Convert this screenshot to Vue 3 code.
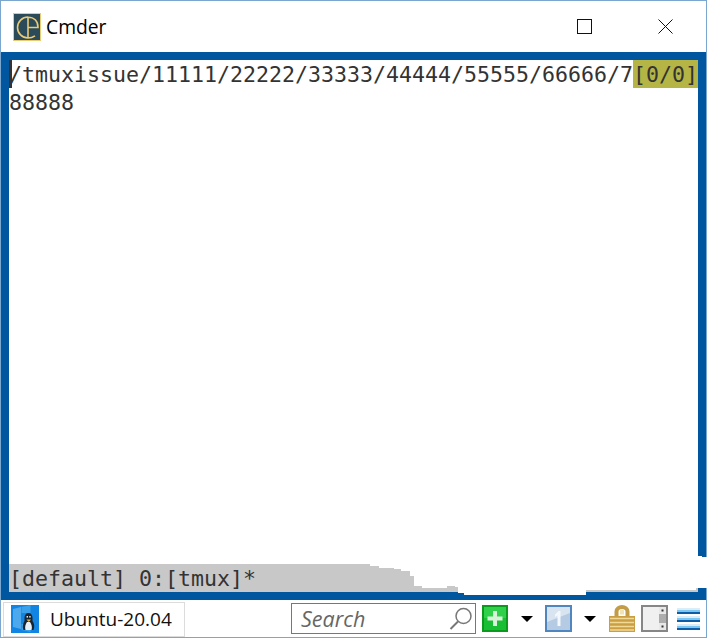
<script setup>
const rows = ['88888']
</script>

<template>
  <div class="window">
    <header class="titlebar">
      <div class="app-title">
        <svg class="app-icon" viewBox="0 0 28 28">
          <rect x="0.5" y="0.5" width="27" height="27" fill="#2b4a5a" stroke="#ecca70" />
          <path d="M15 4A10.5 10.5 0 1 0 15 25C17.5 25 20 24.2 22 22.8M15 4V25M15 4.2C21 4.2 25 8 25 14.5H15" fill="none" stroke="#eccb72" stroke-width="1.6" />
        </svg>
        <span class="app-name">Cmder</span>
      </div>
      <div class="caption">
        <span class="cap-btn"></span>
        <span class="cap-btn"><svg width="15" height="15" viewBox="0 0 15 15"><rect x="0.5" y="0.5" width="14" height="14" fill="none" stroke="#111" /></svg></span>
        <span class="cap-btn"><svg width="15" height="15" viewBox="0 0 15 15"><path d="M0.5 0.5l14 14M14.5 0.5l-14 14" stroke="#111" fill="none" /></svg></span>
      </div>
    </header>

    <main class="frame">
      <div class="terminal">
        <div class="term-lines">
          <div class="term-row"><span class="cursor"></span>/tmuxissue/11111/22222/33333/44444/55555/66666/7<span class="hl">[0/0]</span></div>
          <div v-for="r in rows" :key="r" class="term-row">{{ r }}</div>
        </div>
        <div class="status">[default] 0:[tmux]*</div>
      </div>
      <div class="glitch"></div>
    </main>

    <footer class="taskbar">
      <div class="tab">
        <svg class="tab-icon" viewBox="0 0 28 28">
          <rect width="28" height="28" fill="#1285e2" />
          <path d="M2 4l8-2v22l-8-2z" fill="#4ea9ec" />
          <path d="M10.5 2l9-2v8h-9zM10.5 25l9 2v-8h-9z" fill="#39a0ea" />
          <path d="M12.5 25c-1.5-4 0-7 1-9v-3c0-3 1.500-5 4-5s4 2 4 5v3c1.500 2 2.500 5 1 9z" fill="#18242e" />
          <path d="M14.500 25c-1-3 0-6 1.500-8h3c1.500 2 2.500 5 1.500 8z" fill="#e6f0f6" />
          <path d="M15.500 14.500h4.500l-2.200 2.500z" fill="#e8b23f" />
          <rect x="15.600" y="11" width="1.300" height="1.600" fill="#fff" />
          <rect x="18.300" y="11" width="1.300" height="1.600" fill="#fff" />
        </svg>
        <span class="tab-label">Ubuntu-20.04</span>
      </div>
      <div class="tools">
        <div class="search">
          <span class="search-text">Search</span>
          <svg class="lens" width="24" height="24" viewBox="0 0 24 24">
            <circle cx="14.500" cy="9" r="7.500" fill="none" stroke="#777" stroke-width="1.500" />
            <path d="M9 14.500L1.500 22" stroke="#777" stroke-width="2" />
          </svg>
        </div>
        <svg class="tool-add" width="26" height="27" viewBox="0 0 26 27">
          <rect width="26" height="27" fill="#0a9a1e" />
          <rect x="2" y="2" width="22" height="23" fill="#18bf34" />
          <path d="M2 2h22v11H2z" fill="#2fd04a" />
          <path d="M13 6v15M5.500 13.500h15" stroke="#d9f3da" stroke-width="4" />
        </svg>
        <span class="arrow"></span>
        <svg class="tool-num" width="27" height="27" viewBox="0 0 27 27">
          <rect x="1" y="1" width="25" height="25" fill="#b4cbe3" stroke="#4f86c0" stroke-width="2" />
          <path d="M2 2h23v6L2 17z" fill="#d8e4f0" />
          <path d="M15.500 6v15h-3V10.500l-2.500 1.500V9.500l3.500-3.500z" fill="#f4f7fb" />
        </svg>
        <span class="arrow arrow-two"></span>
        <svg class="tool-lock" width="26" height="27" viewBox="0 0 26 27">
          <path d="M7.500 12V6.500a5.500 4.500 0 0 1 11 0V12" fill="none" stroke="#c39c48" stroke-width="4" />
          <rect x="11" y="4.500" width="4" height="5" fill="#f2e3b4" />
          <rect y="11" width="26" height="16" fill="#c99e45" />
          <path d="M1 13.500h24M1 17.500h24M1 21.500h24M1 25h24" stroke="#f2da94" stroke-width="1.600" />
        </svg>
        <svg class="tool-panel" width="27" height="27" viewBox="0 0 27 27">
          <rect x="1" y="1" width="25" height="25" fill="#f0f0f0" stroke="#868686" stroke-width="2" />
          <rect x="18" y="2" width="7" height="23" fill="#adadad" />
          <rect x="18" y="2" width="7" height="7" fill="#e8e8e8" />
          <rect x="18" y="18" width="7" height="7" fill="#e8e8e8" />
          <rect x="20.500" y="4.500" width="2" height="2" fill="#333" />
          <rect x="20.500" y="20.500" width="2" height="2" fill="#333" />
        </svg>
        <div class="menu">
          <span></span><span></span><span></span>
        </div>
      </div>
    </footer>
  </div>
</template>

<style>
html, body { margin: 0; background: #fff; }
</style>

<style scoped>
.window {
  width: 707px;
  height: 638px;
  box-sizing: border-box;
  border: 1px solid #7ba7cf;
  display: flex;
  flex-direction: column;
  background: #fff;
  font-family: "Liberation Sans", sans-serif;
  position: relative;
}
.titlebar {
  height: 51px;
  display: flex;
  align-items: center;
  justify-content: space-between;
}
.app-title { display: flex; align-items: center; gap: 5px; padding-left: 12px; }
.app-icon { width: 28px; height: 28px; display: block; }
.app-name { font-family: "Open Sans", sans-serif; font-size: 19.3px; color: #000; }
.caption { display: flex; }
.cap-btn { width: 81px; height: 51px; display: flex; align-items: center; justify-content: center; }
.frame {
  height: 548px;
  box-sizing: border-box;
  background: #00569f;
  padding: 8px;
}
.terminal {
  height: 532px;
  background: #fff;
  display: flex;
  flex-direction: column;
  justify-content: space-between;
  font-family: "DejaVu Sans Mono", monospace;
  font-size: 21.6px;
  color: #333;
}
.term-row { height: 28px; line-height: 30px; position: relative; white-space: pre; }
.cursor { position: absolute; left: 0; top: 0; width: 3px; height: 28px; background: #333; }
.hl { background: #b5b546; display: inline-block; height: 28px; vertical-align: top; }
.status { height: 28px; line-height: 30px; background: #c8c8c8; white-space: pre; }
.glitch {
  position: absolute;
  inset: -1px;
  background: #fff;
  pointer-events: none;
  clip-path: polygon(370px 564px, 370px 566px, 379px 566px, 379px 568px, 394px 568px, 394px 569px, 401px 569px, 401px 571px, 410px 571px, 410px 576px, 414px 576px, 414px 586px, 422px 586px, 422px 588px, 447px 588px, 447px 586px, 455px 586px, 455px 587px, 458px 587px, 458px 593px, 464px 593px, 464px 595px, 586px 595px, 586px 590px, 696px 590px, 696px 588px, 707px 588px, 707px 557px, 702px 557px, 702px 556px, 698px 556px, 698px 564px);
}
.taskbar {
  height: 37px;
  display: flex;
  align-items: flex-end;
  justify-content: space-between;
}
.tab {
  width: 182px;
  height: 35px;
  margin-left: 2px;
  box-sizing: border-box;
  border: 1px solid #dcdcdc;
  display: flex;
  align-items: center;
  padding-left: 7px;
  padding-bottom: 1px;
  gap: 11px;
}
.tab-icon { width: 28px; height: 28px; display: block; }
.tab-label { font-family: "Open Sans", sans-serif; font-size: 19px; color: #111; }
.tools { display: flex; align-items: center; height: 37px; padding-right: 6px; }
.search {
  width: 185px;
  height: 31px;
  margin-right: 6px;
  box-sizing: border-box;
  border: 1px solid #777;
  display: flex;
  align-items: center;
  justify-content: space-between;
  padding: 0 2px 0 9px;
}
.search-text { font-family: "Open Sans", sans-serif; font-style: italic; font-size: 21.5px; color: #666; }
.lens { display: block; }
.tools svg { flex: none; }
.tool-add, .tool-num, .tool-lock, .tool-panel { display: block; }
.arrow {
  width: 0; height: 0;
  margin: 0 12px 0 13px;
  border-left: 6px solid transparent;
  border-right: 6px solid transparent;
  border-top: 6px solid #000;
}
.arrow-two { margin: 0 13px 0 12px; }
.tool-lock { margin-right: 6px; }
.menu { display: flex; flex-direction: column; gap: 2px; margin-left: 9px; width: 23px; }
.menu span {
  display: block;
  height: 6px;
  background: linear-gradient(#dcedf8 0 2px, #7cc8f0 2px 4px, #0d5ea8 4px 6px);
}
</style>
